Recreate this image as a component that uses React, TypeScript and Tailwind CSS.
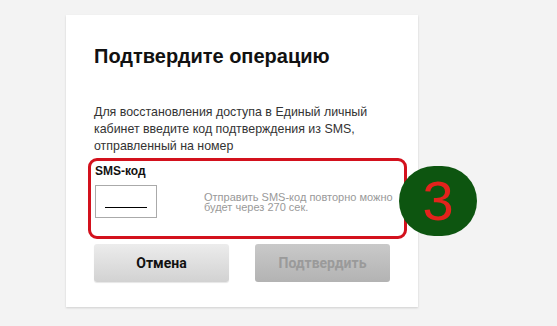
export default function App() {
  return (
    <div className="relative h-[326px] w-[557px] overflow-hidden bg-[#f3f3f3] font-['Liberation_Sans',Arial,sans-serif]">
      <div className="ml-[66px] mt-[15px] h-[292px] w-[352px] bg-white px-[28px] pt-[29px] shadow-[0_1px_2px_rgba(0,0,0,0.15)]">
        <h1 className="text-[20px] font-bold leading-[24px] text-[#111]">Подтвердите операцию</h1>

        <p className="mt-[36px] text-[12.4px] leading-[17px] text-[#333]">
          Для восстановления доступа в Единый личный кабинет введите код подтверждения из SMS,
          отправленный на номер
        </p>

        {/* выделенный блок с кодом */}
        <div className="-ml-[6px] mt-[3px] h-[81px] w-[319px] rounded-[9px] border-[3px] border-[#d3111d] pl-[4px] pt-[3px]">
          <div className="text-[12px] font-bold leading-[14px] text-[#111]">SMS-код</div>
          <div className="mt-[7px] flex items-center">
            <div className="flex h-[33px] w-[62px] items-end justify-center border border-[#aaa] pb-[9px]">
              <div className="h-px w-[42px] bg-black" />
            </div>
            <p className="ml-[47px] w-[200px] text-[11px] leading-[10px] text-[#999]">
              Отправить SMS-код повторно можно будет через 270 сек.
            </p>
          </div>
        </div>

        <div className="mt-[5px] flex justify-between font-['Roboto',sans-serif]">
          <button className="h-[38px] w-[135px] rounded-[3px] bg-gradient-to-b from-[#ececec] to-[#d2d2d2] text-[14px] font-bold text-[#111] shadow-[0_1px_1px_rgba(0,0,0,0.1)]">
            Отмена
          </button>
          <button className="h-[38px] w-[135px] rounded-[3px] bg-gradient-to-b from-[#c9c9c9] to-[#b3b3b3] text-[14px] font-bold text-[#9a9a9a]">
            Подтвердить
          </button>
        </div>
      </div>

      {/* зелёная метка с номером шага */}
      <div className="absolute left-[399px] top-[166px] flex h-[70px] w-[78px] items-center justify-center rounded-full bg-[#0d5510]">
        <span className="font-['Liberation_Sans',Arial,sans-serif] text-[56px] leading-none text-[#e3231c]">3</span>
      </div>
    </div>
  );
}
